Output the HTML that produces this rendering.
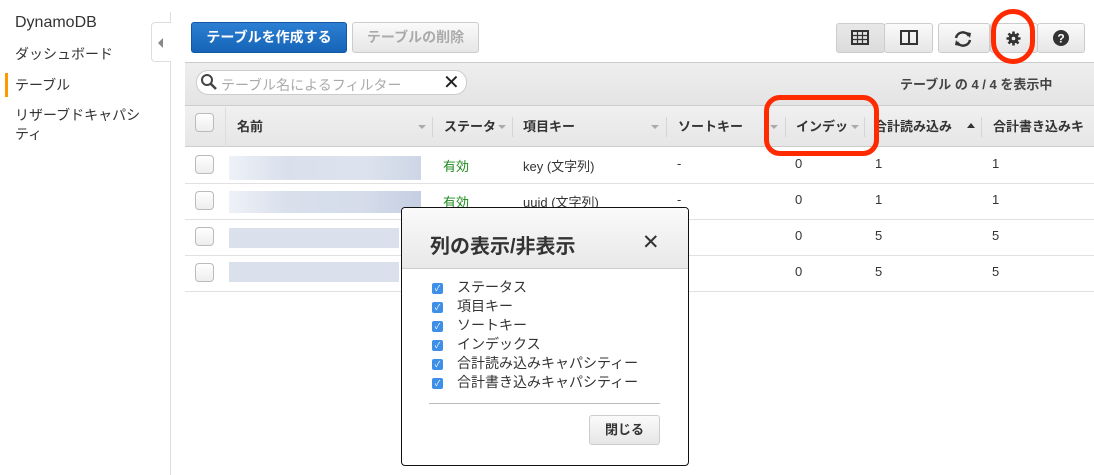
<!DOCTYPE html>
<html><head><meta charset="utf-8"><style>
*{box-sizing:border-box;margin:0;padding:0}
body{width:1094px;height:475px;overflow:hidden;background:#fff;font-family:"Liberation Sans","Noto Sans CJK JP",sans-serif;color:#333;position:relative;font-size:13px}
.a{position:absolute}
.btn{position:absolute;border:1px solid #ccc;border-radius:3px;background:linear-gradient(#fafafa,#e6e6e6)}
.hd{position:absolute;top:106px;height:41px;line-height:41px;font-weight:bold;font-size:13px;color:#333;white-space:nowrap;overflow:hidden}
.sep{position:absolute;top:117px;width:1px;height:20px;background:#d5d5d5}
.car{position:absolute;top:125px;width:0;height:0;border-left:4px solid transparent;border-right:4px solid transparent;border-top:4px solid #aaa}
.cb{position:absolute;left:195px;width:19px;height:19px;border:1px solid #bbb;border-radius:4px;background:linear-gradient(#fff,#eee)}
.rl{position:absolute;left:185px;width:909px;height:1px;background:#e1e1e1}
.ct{position:absolute;font-size:13px;white-space:nowrap}
.ck{position:absolute;left:432px;width:11px;height:11px;border-radius:2px;background:#3d8fe8;color:#fff;font-size:8px;line-height:11px;text-align:center}
.it{position:absolute;left:457px;font-size:14px;color:#333;line-height:16px}
</style></head><body>
<div class="a" style="left:15px;top:14px;font-size:16px;color:#333">DynamoDB</div>
<div class="a" style="left:15px;top:44px;font-size:14px">ダッシュボード</div>
<div class="a" style="left:5px;top:73px;width:3px;height:24px;background:#f90"></div>
<div class="a" style="left:15px;top:75px;font-size:14px">テーブル</div>
<div class="a" style="left:15px;top:106px;font-size:14px;line-height:19px;width:135px">リザーブドキャパシ<br>ティ</div>
<div class="a" style="left:170px;top:12px;width:1px;height:463px;background:#ddd"></div>
<div class="a" style="left:151px;top:22px;width:20px;height:40px;border:1px solid #ddd;border-right:none;border-radius:4px 0 0 4px;background:#fff"></div>
<div class="a" style="left:158px;top:38px;border-top:5px solid transparent;border-bottom:5px solid transparent;border-right:5px solid #888"></div>

<div class="a" style="left:191px;top:22px;width:156px;height:31px;border-radius:3px;background:linear-gradient(#2c7fd2,#1564b8);border:1px solid #1258a3;color:#fff;font-weight:bold;font-size:14px;text-align:center;line-height:29px">テーブルを作成する</div>
<div class="btn" style="left:352px;top:22px;width:127px;height:31px;color:#aaa;font-weight:bold;font-size:14px;text-align:center;line-height:29px">テーブルの削除</div>

<div class="btn" style="left:836px;top:23px;width:49px;height:30px;background:linear-gradient(#e8e8e8,#dcdcdc)"></div>
<div class="btn" style="left:884px;top:23px;width:49px;height:30px"></div>
<svg class="a" style="left:851px;top:30px" width="18" height="15"><rect x="1" y="1" width="16" height="13" fill="none" stroke="#333" stroke-width="2"/><path d="M1 5.5H17M1 9.5H17M6.5 1V14M11.5 1V14" stroke="#333" stroke-width="1.2"/></svg>
<svg class="a" style="left:900px;top:30px" width="18" height="15"><rect x="1" y="1" width="16" height="13" fill="none" stroke="#333" stroke-width="2"/><path d="M9 1V14" stroke="#333" stroke-width="2"/></svg>
<div class="btn" style="left:938px;top:23px;width:52px;height:30px"></div>
<div class="btn" style="left:990px;top:23px;width:48px;height:30px"></div>
<div class="btn" style="left:1037px;top:23px;width:48px;height:30px"></div>
<svg class="a" style="left:953px;top:30px" width="20" height="18"><path d="M3 8A7 7 0 0 1 16 6" fill="none" stroke="#333" stroke-width="2.5"/><path d="M17 10A7 7 0 0 1 4 12" fill="none" stroke="#333" stroke-width="2.5"/><path d="M13 2L18 3L17 8Z M7 16L2 15L3 10Z" fill="#333"/></svg>
<svg class="a" style="left:1006px;top:31px" width="15" height="15"><circle cx="7.5" cy="7.5" r="5" fill="#333"/><path d="M7.5 0.5V14.5M0.5 7.5H14.5M2.5 2.5L12.5 12.5M12.5 2.5L2.5 12.5" stroke="#333" stroke-width="2.6"/><circle cx="7.5" cy="7.5" r="1.8" fill="#eee"/></svg>
<svg class="a" style="left:1053px;top:30px" width="16" height="16"><circle cx="8" cy="8" r="8" fill="#333"/><text x="8" y="12.5" font-size="12" font-weight="bold" fill="#fff" text-anchor="middle" font-family="Liberation Sans">?</text></svg>

<div class="a" style="left:185px;top:62px;width:909px;height:44px;background:linear-gradient(#eee,#e4e4e4);border-top:1px solid #ccc;border-bottom:1px solid #ccc"></div>
<div class="a" style="left:196px;top:70px;width:271px;height:25px;background:#fff;border:1px solid #ccc;border-radius:12px"></div>
<svg class="a" style="left:200px;top:73px" width="18" height="18"><circle cx="7" cy="7" r="5" fill="none" stroke="#444" stroke-width="2"/><path d="M11 11L16 16" stroke="#444" stroke-width="2.5"/></svg>
<div class="a" style="left:221px;top:75px;font-size:14px;color:#aaa">テーブル名によるフィルター</div>
<div class="a" style="left:443px;top:70px;font-size:20px;color:#222">✕</div>
<div class="a" style="left:900px;top:74px;font-size:13px;font-weight:bold;color:#444">テーブル の 4 / 4 を表示中</div>

<div class="a" style="left:185px;top:106px;width:909px;height:41px;background:linear-gradient(#f0f0f0,#e6e6e6);border-bottom:1px solid #ccc"></div>
<div class="cb" style="top:113px"></div>
<div class="a" style="left:225px;top:107px;width:1px;height:40px;background:#ddd"></div>
<div class="hd" style="left:237px">名前</div><div class="car" style="left:418px"></div>
<div class="sep" style="left:432px"></div>
<div class="hd" style="left:444px;width:60px">ステータ</div><div class="car" style="left:498px"></div>
<div class="sep" style="left:512px"></div>
<div class="hd" style="left:523px">項目キー</div><div class="car" style="left:651px"></div>
<div class="sep" style="left:666px"></div>
<div class="hd" style="left:678px">ソートキー</div><div class="car" style="left:770px"></div>
<div class="sep" style="left:785px"></div>
<div class="hd" style="left:796px;width:55px">インデッ</div><div class="car" style="left:851px"></div>
<div class="sep" style="left:864px"></div>
<div class="hd" style="left:874px;width:90px">合計読み込み</div>
<div class="a" style="left:967px;top:123px;border-left:4px solid transparent;border-right:4px solid transparent;border-bottom:5px solid #333"></div>
<div class="sep" style="left:981px"></div>
<div class="hd" style="left:993px;width:101px">合計書き込みキ</div>

<div class="cb" style="top:155px"></div><div class="cb" style="top:191px"></div><div class="cb" style="top:227px"></div><div class="cb" style="top:263px"></div>
<div class="rl" style="top:183px"></div><div class="rl" style="top:219px"></div><div class="rl" style="top:255px"></div><div class="rl" style="top:291px"></div>
<div class="a" style="left:229px;top:156px;width:192px;height:24px;background:linear-gradient(90deg,#eef1f7,#d9e0ec 30%,#dde3ee 70%,#cdd6e6)"></div>
<div class="a" style="left:229px;top:191px;width:192px;height:22px;background:linear-gradient(90deg,#eef1f7,#d9e0ec 30%,#d5dcea 70%,#c5cfe2)"></div>
<div class="a" style="left:229px;top:228px;width:170px;height:20px;background:#dae1ed"></div>
<div class="a" style="left:229px;top:262px;width:170px;height:20px;background:#dae1ed"></div>
<div class="ct" style="left:443px;top:156px;color:#1d8a1d">有効</div>
<div class="ct" style="left:443px;top:192px;color:#1d8a1d">有効</div>
<div class="ct" style="left:523px;top:156px">key (文字列)</div>
<div class="ct" style="left:523px;top:192px">uuid (文字列)</div>
<div class="ct" style="left:677px;top:156px">-</div><div class="ct" style="left:677px;top:192px">-</div>
<div class="ct" style="left:795px;top:156px">0</div><div class="ct" style="left:795px;top:192px">0</div><div class="ct" style="left:795px;top:228px">0</div><div class="ct" style="left:795px;top:264px">0</div>
<div class="ct" style="left:875px;top:156px">1</div><div class="ct" style="left:875px;top:192px">1</div><div class="ct" style="left:875px;top:228px">5</div><div class="ct" style="left:875px;top:264px">5</div>
<div class="ct" style="left:992px;top:156px">1</div><div class="ct" style="left:992px;top:192px">1</div><div class="ct" style="left:992px;top:228px">5</div><div class="ct" style="left:992px;top:264px">5</div>

<div class="a" style="left:401px;top:207px;width:288px;height:259px;background:#fff;border:1px solid #111;border-radius:4px;overflow:hidden">
 <div class="a" style="left:0;top:0;width:286px;height:61px;background:linear-gradient(#fafafa,#e8e8e8);border-bottom:1px solid #ccc"></div>
 <div class="a" style="left:28px;top:22px;font-size:20px;font-weight:bold;color:#333">列の表示/非表示</div>
 <div class="a" style="left:240px;top:22px;font-size:21px;color:#333">✕</div>
</div>
<div class="ck" style="top:283px">✓</div><div class="it" style="top:279px">ステータス</div>
<div class="ck" style="top:302px">✓</div><div class="it" style="top:298px">項目キー</div>
<div class="ck" style="top:321px">✓</div><div class="it" style="top:317px">ソートキー</div>
<div class="ck" style="top:340px">✓</div><div class="it" style="top:336px">インデックス</div>
<div class="ck" style="top:359px">✓</div><div class="it" style="top:355px">合計読み込みキャパシティー</div>
<div class="ck" style="top:378px">✓</div><div class="it" style="top:374px">合計書き込みキャパシティー</div>
<div class="a" style="left:429px;top:403px;width:231px;height:1px;background:#bbb"></div>
<div class="btn" style="left:589px;top:415px;width:71px;height:30px;font-weight:bold;font-size:13px;text-align:center;line-height:28px;color:#333">閉じる</div>

<div class="a" style="left:991px;top:9px;width:44px;height:55px;border:5px solid #ff2a00;border-radius:22px"></div>
<div class="a" style="left:764px;top:95px;width:115px;height:61px;border:5px solid #ff2a00;border-radius:16px"></div>
</body></html>
